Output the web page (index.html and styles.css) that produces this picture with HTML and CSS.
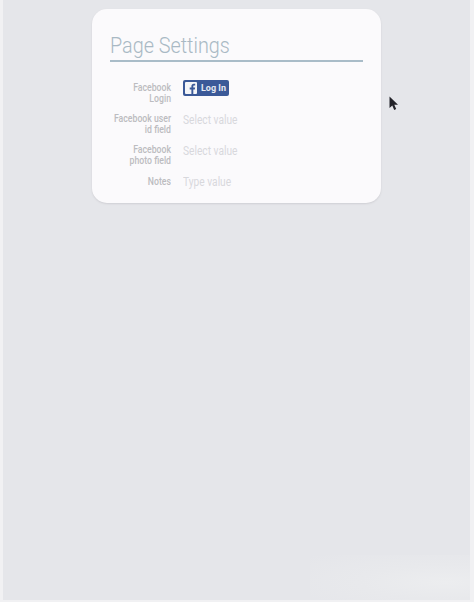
FILE: index.html
```html
<!DOCTYPE html>
<html lang="en">
<head>
<meta charset="utf-8">
<title>Page Settings</title>
<link rel="stylesheet" href="styles.css">
</head>
<body>
<main class="canvas">
  <section class="card">
    <h1 class="title"><span class="title-text">Page Settings</span></h1>
    <div class="form">
      <div class="label">Facebook<br>Login</div>
      <div class="value">
        <div class="fb-btn">
          <svg class="fb-icon" viewBox="0 0 12 12" width="12" height="12" aria-hidden="true">
            <rect width="12" height="12" rx="1" fill="#f4f5f8"/>
            <path d="M8.3 12V7.4h1.5l.3-1.9H8.3V4.4c0-.6.2-.9.9-.9h1V1.8c-.3 0-.8-.1-1.4-.1-1.5 0-2.4.9-2.4 2.5v1.3H4.7v1.9h1.7V12z" fill="#3b5998"/>
          </svg>
          <span>Log In</span>
        </div>
      </div>
      <div class="label">Facebook user<br>id field</div>
      <div class="value placeholder">Select value</div>
      <div class="label">Facebook<br>photo field</div>
      <div class="value placeholder">Select value</div>
      <div class="label single">Notes</div>
      <div class="value placeholder">Type value</div>
    </div>
  </section>
  <svg class="cursor" viewBox="0 0 10 15" width="10" height="15" aria-hidden="true">
    <path d="M.5 .5v11.5l2.8-2.6 1.9 4.6 2-.9-1.9-4.4h3.7z" fill="#23232a"/>
  </svg>
  <div class="glow"></div>
</main>
</body>
</html>
```
FILE: styles.css
```css
* { box-sizing: border-box; }
html, body { margin: 0; height: 100%; }
body {
  background: #f1f1f3;
  padding: 0 4px 2px 3px;
  font-family: Roboto, "Liberation Sans", sans-serif;
  overflow: hidden;
}
.canvas {
  position: relative;
  height: 600px;
  background: #e5e6ea;
  padding: 9px 0 0 89px;
  overflow: hidden;
}
.card {
  width: 289px;
  height: 194px;
  background: #fbfafc;
  border-radius: 15px;
  box-shadow: 0 1px 2px #cfcfd4;
  padding: 22px 18px 0;
}
.title {
  margin: 0;
  height: 31px;
  border-bottom: 2px solid #a9bcc8;
  font-size: 22px;
  line-height: 29px;
  font-weight: 300;
  color: #a9b9c4;
  white-space: nowrap;
}
.title-text {
  display: inline-block;
  transform: scaleX(.9);
  transform-origin: left center;
}
.form {
  display: grid;
  grid-template-columns: 71px 1fr;
  grid-auto-rows: 21px;
  column-gap: 12px;
  row-gap: 10px;
  margin: 18px 0 0 -10px;
}
.label {
  padding-top: 3px;
  font-size: 10px;
  line-height: 10.5px;
  font-weight: 500;
  text-align: right;
  color: #bcbcc0;
  white-space: nowrap;
  transform: scaleX(.87);
  transform-origin: right top;
}
.label.single { padding-top: 4px; }
.value { font-size: 12px; line-height: 14px; }
.placeholder {
  padding-top: 2px;
  color: #d8d8dc;
  transform: scaleX(.85);
  transform-origin: left top;
}
.fb-btn {
  width: 46px;
  height: 16px;
  background: #3b5998;
  border-radius: 2px;
  display: flex;
  align-items: center;
  gap: 4px;
  padding-left: 2px;
  color: #e6e9f2;
  font-size: 9px;
  font-weight: 700;
}
.cursor { position: absolute; left: 386px; top: 96px; }
.glow {
  position: absolute;
  right: 0;
  bottom: 0;
  width: 160px;
  height: 45px;
  background: radial-gradient(ellipse at 85% 60%, #ecedef 0, #e8e9ec 45%, #e5e6ea 100%);
}
```
